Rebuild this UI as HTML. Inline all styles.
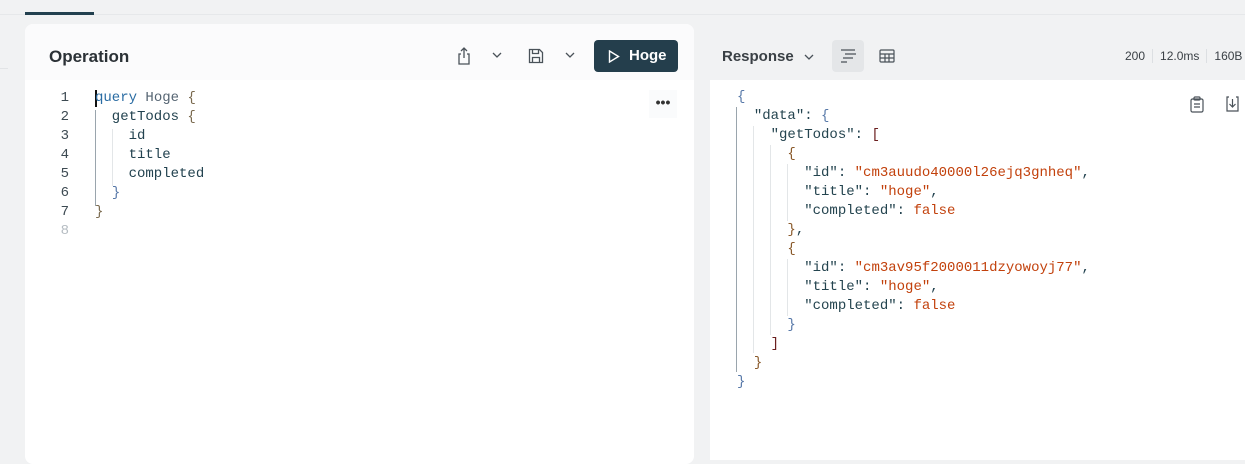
<!DOCTYPE html>
<html><head><meta charset="utf-8"><style>
*{box-sizing:border-box;margin:0;padding:0}
body{width:1245px;height:460px;overflow:hidden;background:#f1f2f3;font-family:"Liberation Sans",sans-serif;position:relative}
.topline{position:absolute;left:0;top:14px;width:1245px;height:1px;background:#e6e8ea}
.tab{position:absolute;left:25px;top:12px;width:69px;height:3px;background:#22404f}
.sideline{position:absolute;left:0;top:68px;width:8px;height:1px;background:#e2e4e6}
.op{position:absolute;left:25px;top:24px;width:669px;height:440px;background:#fff;border-radius:8px;overflow:hidden}
.ophead{height:56px;background:#fbfbfc;position:relative}
.ophead h2{position:absolute;left:24px;top:23px;font-size:17px;font-weight:bold;color:#2b3136}
.btn{position:absolute;left:569px;top:16px;width:84px;height:32px;background:#243e4c;border-radius:4px;color:#fff;font-weight:bold;font-size:15px;line-height:32px;padding-left:35px}
.mono{font-family:"Liberation Mono",monospace;font-size:14px;line-height:19px;white-space:pre}
.code{position:absolute;left:70px;top:65px;color:#22424f}
.nums{position:absolute;left:30px;top:65px;width:14px;text-align:right;color:#3d4a52}
.kw{color:#2a6ca3}.nm{color:#566573}.br{color:#7a6a4f}
.resp{position:absolute;left:710px;top:80px;width:535px;height:380px;background:#fff}
.rh{position:absolute;left:722px;top:48px;font-size:15px;font-weight:bold;color:#3a4045}
.stats{position:absolute;left:1125px;top:49px;font-size:12px;color:#3a4045;white-space:nowrap}
.stats span{display:inline-block;padding:0 7px;border-left:1px solid #dcdfe2}
.json{position:absolute;left:737px;top:88px;color:#22424f}
.s{color:#c2410c}.k{color:#24444f}.b{color:#5778a8}.o{color:#8a5a2b}
.g{position:absolute;width:1px;background:#c8cdd1}
</style></head><body>
<div class="topline"></div><div class="tab"></div><div class="sideline"></div>
<div class="op">
 <div class="ophead"><h2>Operation</h2>
  <svg style="position:absolute;left:431px;top:23px" width="16" height="18" viewBox="0 0 16 18" fill="none" stroke="#4a5259" stroke-width="1.3"><path d="M5 7H3v10h10V7h-2M8 11V1M5 4l3-3 3 3"/></svg>
  <svg style="position:absolute;left:467px;top:28px" width="10" height="7" viewBox="0 0 10 7" fill="none" stroke="#4a5259" stroke-width="1.3"><path d="M1 1l4 4 4-4"/></svg>
  <svg style="position:absolute;left:503px;top:24px" width="16" height="16" viewBox="0 0 16 16" fill="none" stroke="#4a5259" stroke-width="1.3"><path d="M1.5 1.5h10l3 3v10h-13z M4.5 1.5v4h6v-4 M4.5 14.5v-5h7v5"/></svg>
  <svg style="position:absolute;left:540px;top:28px" width="10" height="7" viewBox="0 0 10 7" fill="none" stroke="#4a5259" stroke-width="1.3"><path d="M1 1l4 4 4-4"/></svg>
  <div class="btn"><svg style="position:absolute;left:14px;top:10px" width="12" height="13" viewBox="0 0 12 13" fill="none" stroke="#fff" stroke-width="1.4"><path d="M1.5 1l9 5.5-9 5.5z"/></svg>Hoge</div>
 </div>
 <div class="mono nums">1
2
3
4
5
6
7
<span style="color:#b5bcc2">8</span></div>
 <div class="g" style="left:70px;top:86px;height:96px;background:#9aa5ad"></div>
 <div class="g" style="left:87px;top:105px;height:57px;background:#e3e6e8"></div>
 <div style="position:absolute;left:70px;top:66px;width:2px;height:17px;background:#111"></div>
 <div class="mono code"><span class="kw">query</span> <span class="nm">Hoge</span> <span class="br">{</span>
  getTodos <span class="br">{</span>
    id
    title
    completed
  <span class="b">}</span>
<span class="br">}</span></div>
 <div style="position:absolute;left:624px;top:66px;width:28px;height:28px;background:#fafbfc;color:#333;font-size:14px;font-weight:bold;text-align:center;line-height:24px">•••</div>
</div>
<div class="rh">Response <svg style="margin-left:6px;vertical-align:middle" width="10" height="7" viewBox="0 0 10 7" fill="none" stroke="#4a5259" stroke-width="1.3"><path d="M1 1l4 4 4-4"/></svg></div>
<div style="position:absolute;left:832px;top:40px;width:32px;height:32px;background:#e4e6e8;border-radius:4px"></div>
<svg style="position:absolute;left:840px;top:49px" width="17" height="14" viewBox="0 0 17 14" stroke="#4a5259" stroke-width="1.2"><path d="M1 1h14M5 5h11M3 9h10M1 13h6"/></svg>
<svg style="position:absolute;left:879px;top:49px" width="16" height="14" viewBox="0 0 16 14" fill="none" stroke="#4a5259" stroke-width="1.2"><rect x="1" y="1" width="14" height="12" rx="1"/><path d="M1 5h14M1 9h14M6 5v8M10 5v8"/></svg>
<div class="stats"><span style="border:0;padding-left:0">200</span><span>12.0ms</span><span>160B</span></div>
<div class="resp">
 <svg style="position:absolute;left:480px;top:16px" width="14" height="17" viewBox="0 0 14 17" fill="none" stroke="#4a5259" stroke-width="1.2"><rect x="1" y="3" width="12" height="13" rx="1.5"/><rect x="4" y="1" width="6" height="3" rx="1"/><path d="M4 8h6M4 11h6"/></svg>
 <svg style="position:absolute;left:515px;top:16px" width="15" height="16" viewBox="0 0 15 16" fill="none" stroke="#4a5259" stroke-width="1.2"><path d="M4 1H2v14h11V1h-2M7.5 3v8M4.5 8l3 3 3-3"/></svg>
</div>
<div class="g" style="left:736px;top:107px;height:265px;background:#9aa5ad"></div>
<div class="g" style="left:753px;top:126px;height:227px;background:#e3e6e8"></div>
<div class="g" style="left:770px;top:145px;height:190px;background:#e3e6e8"></div>
<div class="g" style="left:787px;top:164px;height:57px;background:#e3e6e8"></div>
<div class="g" style="left:787px;top:259px;height:57px;background:#e3e6e8"></div>
<div class="mono json"><span class="b">{</span>
  <span class="k">"data"</span>: <span class="b">{</span>
    <span class="k">"getTodos"</span>: <span style="color:#6b1f1f">[</span>
      <span class="o">{</span>
        <span class="k">"id"</span>: <span class="s">"cm3auudo40000l26ejq3gnheq"</span>,
        <span class="k">"title"</span>: <span class="s">"hoge"</span>,
        <span class="k">"completed"</span>: <span class="s">false</span>
      <span class="o">}</span>,
      <span class="o">{</span>
        <span class="k">"id"</span>: <span class="s">"cm3av95f2000011dzyowoyj77"</span>,
        <span class="k">"title"</span>: <span class="s">"hoge"</span>,
        <span class="k">"completed"</span>: <span class="s">false</span>
      <span class="b">}</span>
    <span style="color:#6b1f1f">]</span>
  <span class="o">}</span>
<span class="b">}</span></div>
</body></html>
